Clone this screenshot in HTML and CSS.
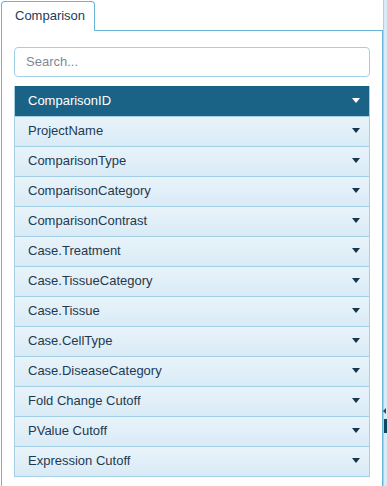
FILE: index.html
```html
<!DOCTYPE html>
<html>
<head>
<meta charset="utf-8">
<link rel="stylesheet" href="styles.css">
</head>
<body>
<div class="page">
  <div class="widget">
    <div class="tabs"><div class="tab">Comparison</div></div>
    <div class="panel">
      <div class="search">Search...</div>
      <ul class="list">
        <li class="item active"><span>ComparisonID</span><i class="caret"></i></li>
        <li class="item"><span>ProjectName</span><i class="caret"></i></li>
        <li class="item"><span>ComparisonType</span><i class="caret"></i></li>
        <li class="item"><span>ComparisonCategory</span><i class="caret"></i></li>
        <li class="item"><span>ComparisonContrast</span><i class="caret"></i></li>
        <li class="item"><span>Case.Treatment</span><i class="caret"></i></li>
        <li class="item"><span>Case.TissueCategory</span><i class="caret"></i></li>
        <li class="item"><span>Case.Tissue</span><i class="caret"></i></li>
        <li class="item"><span>Case.CellType</span><i class="caret"></i></li>
        <li class="item"><span>Case.DiseaseCategory</span><i class="caret"></i></li>
        <li class="item"><span>Fold Change Cutoff</span><i class="caret"></i></li>
        <li class="item"><span>PValue Cutoff</span><i class="caret"></i></li>
        <li class="item"><span>Expression Cutoff</span><i class="caret"></i></li>
      </ul>
    </div>
  </div>
  <div class="side">
    <i class="side-arrow"></i>
    <i class="side-thumb"></i>
  </div>
</div>
</body>
</html>
```
FILE: styles.css
```css
* { box-sizing: border-box; }
html, body { margin: 0; padding: 0; background: #fff; }
body {
  font-family: "Liberation Sans", Arial, sans-serif;
  font-size: 13px;
  color: #1e3a50;
}
.page {
  display: flex;
  height: 486px;
  padding-left: 1px;
}
.widget {
  width: 382px;
  display: flex;
  flex-direction: column;
}
.tabs {
  display: flex;
  height: 30px;
  padding-top: 1px;
}
.tab {
  width: 94px;
  height: 30px;
  border: 1px solid #6ab4d8;
  border-bottom: none;
  border-radius: 4px 4px 0 0;
  background: #fff;
  padding-left: 13px;
  line-height: 28px;
  color: #1a3d5a;
  position: relative;
  z-index: 1;
}
.panel {
  flex: 1;
  border: 1px solid #6ab4d8;
  border-bottom: none;
  padding: 16px 12px 0 12px;
}
.search {
  height: 30px;
  border: 1px solid #9fd0e8;
  border-radius: 4px;
  padding-left: 11px;
  line-height: 28px;
  color: #7a8a96;
  font-size: 13px;
}
.list {
  list-style: none;
  margin: 9px 0 0 0;
  padding: 0;
  border: 1px solid #a3d0e7;
  border-top: none;
}
.item {
  height: 30px;
  border-top: 1px solid #a3d0e7;
  background: linear-gradient(#e8f3fa, #d9ebf6);
  display: flex;
  align-items: center;
  justify-content: space-between;
  padding: 0 9px 2px 13px;
  color: #1e3a50;
}
.item.active {
  background: #1b6386;
  border-top-color: #1b6386;
  color: #fff;
}
.caret {
  width: 0;
  height: 0;
  border-left: 4px solid transparent;
  border-right: 4px solid transparent;
  border-top: 5px solid #16344a;
}
.item.active .caret { border-top-color: #fff; }
.side {
  flex: 1;
  background: #d8ebf6;
  border-left: 1px solid #a9d2ea;
  position: relative;
}
.side-arrow {
  position: absolute;
  left: -1px;
  top: 408px;
  width: 0;
  height: 0;
  border-top: 3px solid transparent;
  border-bottom: 3px solid transparent;
  border-right: 3px solid #2a4a60;
}
.side-thumb {
  position: absolute;
  left: 0;
  top: 419px;
  width: 3px;
  height: 14px;
  background: #0d4766;
}
```
